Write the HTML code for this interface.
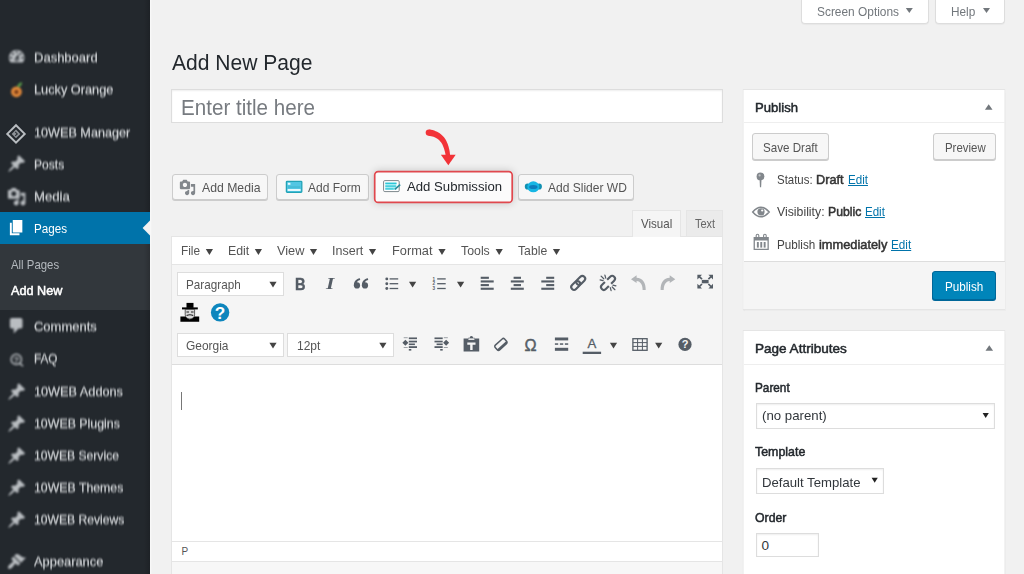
<!DOCTYPE html>
<html lang="en"><head><meta charset="utf-8"><title>Add New Page</title><style>
html,body{margin:0;padding:0;background:#f1f1f1}
body{width:1024px;height:574px;overflow:hidden;background:#f1f1f1;position:relative;font-family:"Liberation Sans",sans-serif;}
.t{position:absolute;white-space:nowrap;display:block;transform-origin:0 0}
.b{position:absolute;box-sizing:border-box;display:block}
.blur{filter:blur(0.8px);-webkit-text-stroke:0.3px currentColor}
.blur2{filter:blur(0.55px)}
svg{overflow:visible}
</style></head><body>
<div class="b" style="left:0px;top:0px;width:150px;height:574px;background:#23282d"></div>
<div class="b" style="left:0px;top:212px;width:150px;height:32px;background:#0073aa"></div>
<div class="b" style="left:0px;top:244px;width:150px;height:66px;background:#32373c"></div>
<svg class="b" style="left:0px;top:0px;" width="1024" height="574" viewBox="0 0 1024 574"><polygon points="150.5,220 150.5,236 142.6,228" fill="#f1f1f1"/></svg>
<div class="b" style="left:150px;top:0px;width:2px;height:574px;background:linear-gradient(to right,rgba(255,255,255,.7),rgba(255,255,255,0));"></div>
<div class="b" style="left:144px;top:0px;width:6px;height:212px;background:linear-gradient(to right,rgba(0,0,0,0),rgba(0,0,0,.16));"></div>
<div class="b" style="left:144px;top:244px;width:6px;height:330px;background:linear-gradient(to right,rgba(0,0,0,0),rgba(0,0,0,.16));"></div>
<span class="t blur" style="left:33.60px;top:51px;font-size:13.4px;line-height:13.4px;color:#cdd0d3;transform:scaleX(0.9716);">Dashboard</span>
<span class="t blur" style="left:33.60px;top:83px;font-size:13.4px;line-height:13.4px;color:#cdd0d3;transform:scaleX(0.9519);">Lucky Orange</span>
<span class="t blur" style="left:33.60px;top:126px;font-size:13.4px;line-height:13.4px;color:#cdd0d3;transform:scaleX(0.9437);">10WEB Manager</span>
<span class="t blur" style="left:33.60px;top:158px;font-size:13.4px;line-height:13.4px;color:#cdd0d3;transform:scaleX(0.9015);">Posts</span>
<span class="t blur" style="left:33.60px;top:190px;font-size:13.4px;line-height:13.4px;color:#cdd0d3;transform:scaleX(0.9832);">Media</span>
<span class="t" style="left:33.90px;top:222px;font-size:13.6px;line-height:13.6px;color:#fff;transform:scaleX(0.8585);">Pages</span>
<span class="t" style="left:10.90px;top:259px;font-size:12.6px;line-height:12.6px;color:#b4b9be;transform:scaleX(0.9035);">All Pages</span>
<span class="t" style="left:10.90px;top:285px;font-size:12.6px;line-height:12.6px;color:#fff;-webkit-text-stroke:0.5px currentColor;transform:scaleX(1.0048);">Add New</span>
<span class="t blur" style="left:33.60px;top:320px;font-size:13.4px;line-height:13.4px;color:#cdd0d3;transform:scaleX(0.9693);">Comments</span>
<span class="t blur" style="left:33.60px;top:352px;font-size:13.4px;line-height:13.4px;color:#cdd0d3;transform:scaleX(0.8769);">FAQ</span>
<span class="t blur" style="left:33.60px;top:385px;font-size:13.4px;line-height:13.4px;color:#cdd0d3;transform:scaleX(0.9482);">10WEB Addons</span>
<span class="t blur" style="left:33.60px;top:417px;font-size:13.4px;line-height:13.4px;color:#cdd0d3;transform:scaleX(0.9227);">10WEB Plugins</span>
<span class="t blur" style="left:33.60px;top:449px;font-size:13.4px;line-height:13.4px;color:#cdd0d3;transform:scaleX(0.9059);">10WEB Service</span>
<span class="t blur" style="left:33.60px;top:481px;font-size:13.4px;line-height:13.4px;color:#cdd0d3;transform:scaleX(0.9186);">10WEB Themes</span>
<span class="t blur" style="left:33.60px;top:513px;font-size:13.4px;line-height:13.4px;color:#cdd0d3;transform:scaleX(0.9058);">10WEB Reviews</span>
<span class="t blur" style="left:33.60px;top:555px;font-size:13.4px;line-height:13.4px;color:#cdd0d3;transform:scaleX(0.9604);">Appearance</span>
<svg class="b blur" style="left:6.5px;top:47.3px;" width="19.4" height="19.4" viewBox="0 0 20 20"><path d="M3.76 16h12.48c1.1-1.37 1.76-3.11 1.76-5 0-4.42-3.58-8-8-8s-8 3.58-8 8c0 1.89.66 3.63 1.76 5zM10 4c.55 0 1 .45 1 1s-.45 1-1 1-1-.45-1-1 .45-1 1-1zM6 6c.55 0 1 .45 1 1s-.45 1-1 1-1-.45-1-1 .45-1 1-1zm8 0c.55 0 1 .45 1 1s-.45 1-1 1-1-.45-1-1 .45-1 1-1zm-5.37 5.55L12 7v6c0 1.1-.9 2-2 2s-2-.9-2-2c0-.57.24-1.08.63-1.45zM4 10c.55 0 1 .45 1 1s-.45 1-1 1-1-.45-1-1 .45-1 1-1zm12 0c.55 0 1 .45 1 1s-.45 1-1 1-1-.45-1-1 .45-1 1-1zm-5 3c0-.55-.45-1-1-1s-1 .45-1 1 .45 1 1 1 1-.45 1-1z" fill="#b9bdc1" fill-rule="evenodd"/></svg>
<svg class="b blur" style="left:0px;top:0px;" width="1024" height="574" viewBox="0 0 1024 574"><circle cx="16.4" cy="91.8" r="5.4" fill="#e58a3a"/><circle cx="16.4" cy="92" r="2.2" fill="#7a3d18"/><path d="M17,86.6 q1,-3.6 4.8,-4.6 q0.6,3.8 -3.2,5.2z" fill="#5a9c4a"/></svg>
<svg class="b blur2" style="left:0px;top:0px;" width="1024" height="574" viewBox="0 0 1024 574"><polygon points="16,125.2 24.7,133.900 16,142.6 7.3,133.900" fill="none" stroke="#b9bdc1" stroke-width="2"/><polygon points="16,129.6 20.3,133.900 16,138.2 11.7,133.900" fill="#8d9297"/><path d="M15.2,131.900 l2,2 l-2,2" stroke="#2b3035" stroke-width="1.2" fill="none"/></svg>
<svg class="b blur" style="left:6.5px;top:154.0px;" width="19.4" height="19.4" viewBox="0 0 20 20"><path d="M10.44 3.02l1.82-1.82 6.36 6.35-1.83 1.82c-1.05-.68-2.48-.57-3.41.36l-.75.75c-.92.93-1.04 2.35-.35 3.41l-1.83 1.82-2.41-2.41-2.8 2.79c-.42.42-3.38 2.71-3.8 2.29s1.86-3.39 2.28-3.81l2.79-2.79L4.1 9.36l1.83-1.82c1.05.69 2.48.57 3.4-.36l.75-.75c.93-.92 1.05-2.35.36-3.41z" fill="#b9bdc1" fill-rule="evenodd"/></svg>
<svg class="b blur" style="left:6.5px;top:186.5px;" width="19.4" height="19.4" viewBox="0 0 20 20"><path d="M13 11V4c0-.55-.45-1-1-1h-1.67L9 1H5L3.67 3H2c-.55 0-1 .45-1 1v7c0 .55.45 1 1 1h10c.55 0 1-.45 1-1zM7 4.5c1.38 0 2.5 1.12 2.5 2.5S8.38 9.5 7 9.5 4.5 8.38 4.5 7 5.62 4.5 7 4.5zM14 6h5v10.5c0 1.38-1.12 2.5-2.5 2.5S14 17.88 14 16.5s1.12-2.5 2.5-2.5c.17 0 .34.02.5.05V9h-3V6zm-4 8.050V13h2v3.500c0 1.380-1.120 2.500-2.500 2.500S7 17.880 7 16.500 8.120 14 9.500 14c.17 0 .34.020.5.050z" fill="#b9bdc1" fill-rule="evenodd"/></svg>
<svg class="b" style="left:6.6px;top:218.4px;" width="19.2" height="19.2" viewBox="0 0 20 20"><path d="M6 15V2h10v13H6zm-1 1h8v2H3V5h2v11z" fill="#fff" fill-rule="evenodd"/></svg>
<svg class="b blur" style="left:6.5px;top:316.3px;" width="19.4" height="19.4" viewBox="0 0 20 20"><path d="M5 2h9c1.1 0 2 .9 2 2v7c0 1.1-.9 2-2 2h-2l-5 5v-5H5c-1.1 0-2-.9-2-2V4c0-1.1.9-2 2-2z" fill="#b9bdc1" fill-rule="evenodd"/></svg>
<svg class="b blur" style="left:0px;top:0px;" width="1024" height="574" viewBox="0 0 1024 574"><g fill="none" stroke="#b9bdc1" stroke-width="1.5"><circle cx="16.3" cy="359.400" r="5.1"/><path d="M19.8,363.4 l3.2,2.800"/></g><text x="16.2" y="362.6" text-anchor="middle" font-size="9" font-weight="bold" fill="#b9bdc1" font-family="Liberation Sans,sans-serif">?</text></svg>
<svg class="b blur" style="left:6.5px;top:381.7px;" width="19.4" height="19.4" viewBox="0 0 20 20"><path d="M10.44 3.02l1.82-1.82 6.36 6.35-1.83 1.82c-1.05-.68-2.48-.57-3.41.36l-.75.75c-.92.93-1.04 2.35-.35 3.41l-1.83 1.82-2.41-2.41-2.8 2.79c-.42.42-3.38 2.71-3.8 2.29s1.86-3.39 2.28-3.81l2.79-2.79L4.1 9.36l1.83-1.82c1.05.69 2.48.57 3.4-.36l.75-.75c.93-.92 1.05-2.35.36-3.41z" fill="#b9bdc1" fill-rule="evenodd"/></svg>
<svg class="b blur" style="left:6.5px;top:413.7px;" width="19.4" height="19.4" viewBox="0 0 20 20"><path d="M10.44 3.02l1.82-1.82 6.36 6.35-1.83 1.82c-1.05-.68-2.48-.57-3.41.36l-.75.75c-.92.93-1.04 2.35-.35 3.41l-1.83 1.82-2.41-2.41-2.8 2.79c-.42.42-3.38 2.71-3.8 2.29s1.86-3.39 2.28-3.81l2.79-2.79L4.1 9.36l1.83-1.82c1.05.69 2.48.57 3.4-.36l.75-.75c.93-.92 1.05-2.35.36-3.41z" fill="#b9bdc1" fill-rule="evenodd"/></svg>
<svg class="b blur" style="left:6.5px;top:445.7px;" width="19.4" height="19.4" viewBox="0 0 20 20"><path d="M10.44 3.02l1.82-1.82 6.36 6.35-1.83 1.82c-1.05-.68-2.48-.57-3.41.36l-.75.75c-.92.93-1.04 2.35-.35 3.41l-1.83 1.82-2.41-2.41-2.8 2.79c-.42.42-3.38 2.71-3.8 2.29s1.86-3.39 2.28-3.81l2.79-2.79L4.1 9.36l1.83-1.82c1.05.69 2.48.57 3.4-.36l.75-.75c.93-.92 1.05-2.35.36-3.41z" fill="#b9bdc1" fill-rule="evenodd"/></svg>
<svg class="b blur" style="left:6.5px;top:477.7px;" width="19.4" height="19.4" viewBox="0 0 20 20"><path d="M10.44 3.02l1.82-1.82 6.36 6.35-1.83 1.82c-1.05-.68-2.48-.57-3.41.36l-.75.75c-.92.93-1.04 2.35-.35 3.41l-1.83 1.82-2.41-2.41-2.8 2.79c-.42.42-3.38 2.71-3.8 2.29s1.86-3.39 2.28-3.81l2.79-2.79L4.1 9.36l1.83-1.82c1.05.69 2.48.57 3.4-.36l.75-.75c.93-.92 1.05-2.35.36-3.41z" fill="#b9bdc1" fill-rule="evenodd"/></svg>
<svg class="b blur" style="left:6.5px;top:509.7px;" width="19.4" height="19.4" viewBox="0 0 20 20"><path d="M10.44 3.02l1.82-1.82 6.36 6.35-1.83 1.82c-1.05-.68-2.48-.57-3.41.36l-.75.75c-.92.93-1.04 2.35-.35 3.41l-1.83 1.82-2.41-2.41-2.8 2.79c-.42.42-3.38 2.71-3.8 2.29s1.86-3.39 2.28-3.81l2.79-2.79L4.1 9.36l1.83-1.82c1.05.69 2.48.57 3.4-.36l.75-.75c.93-.92 1.05-2.35.36-3.41z" fill="#b9bdc1" fill-rule="evenodd"/></svg>
<svg class="b blur" style="left:6.5px;top:551.6999999999999px;" width="19.4" height="19.4" viewBox="0 0 20 20"><path d="M14.48 11.06L7.41 3.99l1.5-1.5c.5-.56 2.3-.47 3.51.32 1.21.8 1.43 1.280 2.910 2.100 1.180.640 2.450 1.260 4.450.850zm-.71.710L6.700 4.700 4.930 6.470c-.39.390-.39 1.020 0 1.410l1.060 1.060c.390.390.390 1.030 0 1.420-.6.600-1.430 1.110-2.210 1.690-.35.260-.7.530-1.010.84C1.430 14.230.4 16.080 1.400 17.070c.990 1 2.840-.030 4.180-1.360.310-.310.580-.660.850-1.020.570-.780 1.080-1.610 1.690-2.210.390-.390 1.020-.390 1.410 0l1.060 1.060c.390.390 1.020.390 1.410 0z" fill="#b9bdc1" fill-rule="evenodd"/></svg>
<div class="b" style="left:801px;top:-1px;width:128px;height:25px;background:#fff;border:1px solid #ddd;border-top:none;border-radius:0 0 4px 4px;box-shadow:0 1px 1px rgba(0,0,0,.04);"></div>
<span class="t" style="left:816.50px;top:6px;font-size:12.6px;line-height:12.6px;color:#72777c;transform:scaleX(0.9454);">Screen Options</span>
<svg class="b" style="left:0;top:0" width="1024" height="574"><polygon points="905.8,7.9 912.8,7.9 909.3,13.1" fill="#72777c"/></svg>
<div class="b" style="left:935px;top:-1px;width:70px;height:25px;background:#fff;border:1px solid #ddd;border-top:none;border-radius:0 0 4px 4px;box-shadow:0 1px 1px rgba(0,0,0,.04);"></div>
<span class="t" style="left:951.40px;top:6px;font-size:12.6px;line-height:12.6px;color:#72777c;transform:scaleX(0.9373);">Help</span>
<svg class="b" style="left:0;top:0" width="1024" height="574"><polygon points="983.0,7.9 990.0,7.9 986.5,13.1" fill="#72777c"/></svg>
<span class="t" style="left:171.50px;top:52px;font-size:22.4px;line-height:22.4px;color:#23282d;transform:scaleX(0.9404);">Add New Page</span>
<div class="b" style="left:171px;top:89px;width:552px;height:34px;background:#fff;border:1px solid #ddd;box-shadow:inset 0 1px 2px rgba(0,0,0,.07);"></div>
<span class="t" style="left:181.00px;top:98px;font-size:21.4px;line-height:21.4px;color:#777b80;transform:scaleX(0.9630);">Enter title here</span>
<svg class="b" style="left:0px;top:0px;" width="1024" height="574" viewBox="0 0 1024 574"><polygon points="428.5,135.8 429.9,135.9 431.2,136.2 432.4,136.5 433.5,136.8 434.6,137.2 435.6,137.7 436.5,138.2 437.4,138.8 438.3,139.4 439.1,140.1 439.8,140.9 440.5,141.7 441.2,142.6 441.8,143.6 442.4,144.6 442.9,145.7 443.4,146.9 443.9,148.2 444.3,149.6 444.7,151.0 445.1,152.5 445.4,154.1 445.7,155.8 450.1,155.2 449.9,153.4 449.7,151.7 449.4,150.0 449.0,148.4 448.6,146.8 448.1,145.3 447.6,143.8 447.0,142.4 446.4,141.0 445.7,139.7 444.9,138.5 444.0,137.3 443.0,136.2 442.0,135.2 440.9,134.2 439.7,133.3 438.4,132.5 437.1,131.8 435.7,131.2 434.2,130.6 432.6,130.1 431.0,129.7 429.3,129.4" fill="#f23338"/><circle cx="428.9" cy="132.6" r="3.2" fill="#f23338"/><polygon points="440.9,154.8 455.7,154.8 448.3,165.3" fill="#f23338"/></svg>
<div class="b" style="left:172px;top:174px;width:96px;height:26px;background:#f7f7f7;border:1px solid #ccc;border-radius:3px;box-shadow:0 1px 0 #ccc;"></div>
<span class="t" style="left:201.50px;top:182px;font-size:12.6px;line-height:12.6px;color:#555;transform:scaleX(0.9708);">Add Media</span>
<div class="b" style="left:276px;top:174px;width:93px;height:26px;background:#f7f7f7;border:1px solid #ccc;border-radius:3px;box-shadow:0 1px 0 #ccc;"></div>
<span class="t" style="left:308.30px;top:182px;font-size:12.6px;line-height:12.6px;color:#555;transform:scaleX(0.9527);">Add Form</span>
<div class="b" style="left:374px;top:171px;width:139px;height:32px;background:#fbfbfb;border-radius:4px;box-shadow:0 0 9px rgba(0,0,0,.2);"></div>
<svg class="b" style="left:0px;top:0px;" width="1024" height="574" viewBox="0 0 1024 574"><rect x="374.7" y="171.6" width="137.5" height="30.7" rx="3.4" fill="none" stroke="#e0484e" stroke-width="1.7"/></svg>
<span class="t" style="left:406.60px;top:180px;font-size:13.4px;line-height:13.4px;color:#23282d;transform:scaleX(0.9819);">Add Submission</span>
<div class="b" style="left:518px;top:174px;width:116px;height:26px;background:#f7f7f7;border:1px solid #ccc;border-radius:3px;box-shadow:0 1px 0 #ccc;"></div>
<span class="t" style="left:547.50px;top:182px;font-size:12.6px;line-height:12.6px;color:#555;transform:scaleX(0.9549);">Add Slider WD</span>
<div class="b" style="left:632px;top:210px;width:49px;height:27px;background:#f5f5f5;border:1px solid #e5e5e5;border-bottom:none;"></div>
<span class="t" style="left:640.70px;top:218px;font-size:12.6px;line-height:12.6px;color:#555;transform:scaleX(0.9183);">Visual</span>
<div class="b" style="left:686px;top:210px;width:37px;height:26px;background:#ebebeb;border:1px solid #e5e5e5;border-bottom:none;"></div>
<span class="t" style="left:694.60px;top:218px;font-size:12.6px;line-height:12.6px;color:#666;transform:scaleX(0.8737);">Text</span>
<div class="b" style="left:171px;top:236px;width:552px;height:326px;background:#fff;border:1px solid #e5e5e5;"></div>
<div class="b" style="left:172px;top:264px;width:550px;height:101px;background:#f5f5f5;border-top:1px solid #e5e5e5;border-bottom:1px solid #ddd;"></div>
<div class="b" style="left:632px;top:236px;width:49px;height:1px;background:#f5f5f5;border-left:1px solid #e5e5e5;border-right:1px solid #e5e5e5;"></div>
<div class="b" style="left:172px;top:541px;width:550px;height:1px;background:#e5e5e5"></div>
<div class="b" style="left:171px;top:561px;width:552px;height:19px;background:#f7f7f7;border:1px solid #e5e5e5;"></div>
<span class="t" style="left:181.60px;top:547px;font-size:10px;line-height:10px;color:#555;">P</span>
<div class="b" style="left:181px;top:392px;width:1px;height:18px;background:#777"></div>
<span class="t" style="left:180.90px;top:244px;font-size:13.6px;line-height:13.6px;color:#555;transform:scaleX(0.8710);">File</span>
<svg class="b" style="left:0;top:0" width="1024" height="574"><polygon points="205.8,248.9 213.0,248.9 209.4,254.9" fill="#444"/></svg>
<span class="t" style="left:227.70px;top:244px;font-size:13.6px;line-height:13.6px;color:#555;transform:scaleX(0.9092);">Edit</span>
<svg class="b" style="left:0;top:0" width="1024" height="574"><polygon points="254.79999999999998,248.9 262.0,248.9 258.4,254.9" fill="#444"/></svg>
<span class="t" style="left:277.00px;top:244px;font-size:13.6px;line-height:13.6px;color:#555;transform:scaleX(0.9394);">View</span>
<svg class="b" style="left:0;top:0" width="1024" height="574"><polygon points="309.9,248.9 317.1,248.9 313.5,254.9" fill="#444"/></svg>
<span class="t" style="left:332.30px;top:244px;font-size:13.6px;line-height:13.6px;color:#555;transform:scaleX(0.9206);">Insert</span>
<svg class="b" style="left:0;top:0" width="1024" height="574"><polygon points="368.9,248.9 376.1,248.9 372.5,254.9" fill="#444"/></svg>
<span class="t" style="left:392.00px;top:244px;font-size:13.6px;line-height:13.6px;color:#555;transform:scaleX(0.9402);">Format</span>
<svg class="b" style="left:0;top:0" width="1024" height="574"><polygon points="438.4,248.9 445.6,248.9 442,254.9" fill="#444"/></svg>
<span class="t" style="left:461.00px;top:244px;font-size:13.6px;line-height:13.6px;color:#555;transform:scaleX(0.9069);">Tools</span>
<svg class="b" style="left:0;top:0" width="1024" height="574"><polygon points="495.59999999999997,248.9 502.8,248.9 499.2,254.9" fill="#444"/></svg>
<span class="t" style="left:517.80px;top:244px;font-size:13.6px;line-height:13.6px;color:#555;transform:scaleX(0.8984);">Table</span>
<svg class="b" style="left:0;top:0" width="1024" height="574"><polygon points="552.9,248.9 560.1,248.9 556.5,254.9" fill="#444"/></svg>
<div class="b" style="left:177px;top:272px;width:107px;height:24px;background:#fff;border:1px solid #ddd;"></div>
<span class="t" style="left:186.20px;top:279px;font-size:12.6px;line-height:12.6px;color:#555;transform:scaleX(0.9296);">Paragraph</span>
<svg class="b" style="left:0;top:0" width="1024" height="574"><polygon points="269.4,281.65000000000003 276.6,281.65000000000003 273,287.55" fill="#444"/></svg>
<div class="b" style="left:177px;top:333px;width:107px;height:24px;background:#fff;border:1px solid #ddd;"></div>
<span class="t" style="left:186.20px;top:340px;font-size:12.6px;line-height:12.6px;color:#555;transform:scaleX(0.9475);">Georgia</span>
<svg class="b" style="left:0;top:0" width="1024" height="574"><polygon points="269.4,342.65000000000003 276.6,342.65000000000003 273,348.55" fill="#444"/></svg>
<div class="b" style="left:287px;top:333px;width:107px;height:24px;background:#fff;border:1px solid #ddd;"></div>
<span class="t" style="left:297.40px;top:340px;font-size:12.6px;line-height:12.6px;color:#555;transform:scaleX(0.9536);">12pt</span>
<svg class="b" style="left:0;top:0" width="1024" height="574"><polygon points="379.29999999999995,342.65000000000003 386.5,342.65000000000003 382.9,348.55" fill="#444"/></svg>
<div class="b" style="left:743px;top:89px;width:263px;height:221px;background:#fff;border:1px solid #e5e5e5;box-shadow:0 1px 1px rgba(0,0,0,.04);transform:translateX(-0.5px);"></div>
<div class="b" style="left:744px;top:122px;width:261px;height:1px;background:#eee"></div>
<span class="t" style="left:755.00px;top:101px;font-size:13.6px;line-height:13.6px;color:#23282d;-webkit-text-stroke:0.5px currentColor;transform:scaleX(0.9640);">Publish</span>
<svg class="b" style="left:0;top:0" width="1024" height="574"><polygon points="984.9000000000001,109.7 992.5,109.7 988.7,104.3" fill="#72777c"/></svg>
<div class="b" style="left:752px;top:133px;width:77px;height:27px;background:#f7f7f7;border:1px solid #ccc;border-radius:3px;box-shadow:0 1px 0 #ccc;"></div>
<span class="t" style="left:763.20px;top:142px;font-size:12.6px;line-height:12.6px;color:#555;transform:scaleX(0.9205);">Save Draft</span>
<div class="b" style="left:933px;top:133px;width:63px;height:27px;background:#f7f7f7;border:1px solid #ccc;border-radius:3px;box-shadow:0 1px 0 #ccc;"></div>
<span class="t" style="left:944.50px;top:142px;font-size:12.6px;line-height:12.6px;color:#555;transform:scaleX(0.9073);">Preview</span>
<span class="t" style="left:776.80px;top:174px;font-size:12.6px;line-height:12.6px;color:#444;transform:scaleX(0.9078);">Status:</span>
<span class="t" style="left:816.20px;top:174px;font-size:12.6px;line-height:12.6px;color:#333;-webkit-text-stroke:0.5px currentColor;transform:scaleX(1.0106);">Draft</span>
<span class="t" style="left:847.90px;top:174px;font-size:12.6px;line-height:12.6px;color:#0073aa;transform:scaleX(0.9215);text-decoration:underline;">Edit</span>
<span class="t" style="left:776.80px;top:206px;font-size:12.6px;line-height:12.6px;color:#444;transform:scaleX(0.9755);">Visibility:</span>
<span class="t" style="left:828.00px;top:206px;font-size:12.6px;line-height:12.6px;color:#333;-webkit-text-stroke:0.5px currentColor;transform:scaleX(0.9707);">Public</span>
<span class="t" style="left:865.20px;top:206px;font-size:12.6px;line-height:12.6px;color:#0073aa;transform:scaleX(0.9169);text-decoration:underline;">Edit</span>
<span class="t" style="left:776.80px;top:239px;font-size:12.6px;line-height:12.6px;color:#444;transform:scaleX(0.9267);">Publish</span>
<span class="t" style="left:819.20px;top:239px;font-size:12.6px;line-height:12.6px;color:#333;-webkit-text-stroke:0.5px currentColor;transform:scaleX(1.0175);">immediately</span>
<span class="t" style="left:891.40px;top:239px;font-size:12.6px;line-height:12.6px;color:#0073aa;transform:scaleX(0.9307);text-decoration:underline;">Edit</span>
<div class="b" style="left:744px;top:261px;width:261px;height:48px;background:#f5f5f5;border-top:1px solid #ddd;"></div>
<div class="b" style="left:932px;top:271px;width:64px;height:29px;background:#0085ba;border:1px solid #006799;border-radius:3px;box-shadow:0 1px 0 #006799;"></div>
<span class="t" style="left:945.00px;top:281px;font-size:12.6px;line-height:12.6px;color:#fff;transform:scaleX(0.9267);">Publish</span>
<div class="b" style="left:743px;top:330px;width:263px;height:260px;background:#fff;border:1px solid #e5e5e5;box-shadow:0 1px 1px rgba(0,0,0,.04);transform:translateX(-0.5px);"></div>
<div class="b" style="left:744px;top:364px;width:261px;height:1px;background:#eee"></div>
<span class="t" style="left:755.00px;top:342px;font-size:13.6px;line-height:13.6px;color:#23282d;-webkit-text-stroke:0.5px currentColor;transform:scaleX(0.9952);">Page Attributes</span>
<svg class="b" style="left:0;top:0" width="1024" height="574"><polygon points="985.5,350.7 993.0999999999999,350.7 989.3,345.3" fill="#72777c"/></svg>
<span class="t" style="left:755.00px;top:382px;font-size:12.6px;line-height:12.6px;color:#23282d;-webkit-text-stroke:0.5px currentColor;transform:scaleX(0.9343);">Parent</span>
<div class="b" style="left:756px;top:403px;width:239px;height:26px;background:#fff;border:1px solid #ddd;box-shadow:inset 0 1px 2px rgba(0,0,0,.07);"></div>
<span class="t" style="left:761.80px;top:409px;font-size:13.6px;line-height:13.6px;color:#32373c;transform:scaleX(0.9739);">(no parent)</span>
<svg class="b" style="left:0;top:0" width="1024" height="574"><polygon points="982.6,413.0 988.8000000000001,413.0 985.7,418.0" fill="#222"/></svg>
<span class="t" style="left:755.00px;top:446px;font-size:12.6px;line-height:12.6px;color:#23282d;-webkit-text-stroke:0.5px currentColor;transform:scaleX(0.9839);">Template</span>
<div class="b" style="left:756px;top:468px;width:128px;height:26px;background:#fff;border:1px solid #ddd;box-shadow:inset 0 1px 2px rgba(0,0,0,.07);"></div>
<span class="t" style="left:762.30px;top:476px;font-size:13.6px;line-height:13.6px;color:#32373c;transform:scaleX(0.9676);">Default Template</span>
<svg class="b" style="left:0;top:0" width="1024" height="574"><polygon points="871.6,477.8 877.8000000000001,477.8 874.7,482.8" fill="#222"/></svg>
<span class="t" style="left:755.00px;top:512px;font-size:12.6px;line-height:12.6px;color:#23282d;-webkit-text-stroke:0.5px currentColor;transform:scaleX(0.9754);">Order</span>
<div class="b" style="left:756px;top:533px;width:63px;height:24px;background:#fff;border:1px solid #ddd;box-shadow:inset 0 1px 2px rgba(0,0,0,.07);"></div>
<span class="t" style="left:761.50px;top:539px;font-size:13.6px;line-height:13.6px;color:#32373c;">0</span>
<span class="t" style="left:294.90px;top:276px;font-size:16.2px;line-height:16.2px;color:#555d66;font-weight:bold;transform:scaleX(.9);transform-origin:0 0;-webkit-text-stroke:0.4px currentColor;">B</span>
<span class="t" style="left:325.6px;top:275.4px;font-size:17.6px;line-height:17.6px;color:#555d66;font-family:'Liberation Serif',serif;font-style:italic;font-weight:bold;transform:scaleX(1.22);transform-origin:0 0">I</span>
<svg class="b" style="left:0px;top:0px;" width="1024" height="574" viewBox="0 0 1024 574"><circle cx="357.0" cy="285.40000000000003" r="3.1" fill="#555d66"/><path d="M353.9,285.8 C353.7,281.40000000000003 356.4,278.8 359.9,278.3 L360.2,280.00000000000006 C357.8,280.6 356.8,281.8 356.8,283.40000000000003z" fill="#555d66"/><circle cx="365.0" cy="285.40000000000003" r="3.1" fill="#555d66"/><path d="M361.9,285.8 C361.7,281.40000000000003 364.4,278.8 367.9,278.3 L368.2,280.00000000000006 C365.8,280.6 364.8,281.8 364.8,283.40000000000003z" fill="#555d66"/></svg>
<svg class="b" style="left:0px;top:0px;" width="1024" height="574" viewBox="0 0 1024 574"><circle cx="386.8" cy="278.9" r="1.45" fill="#555d66"/><rect x="389.6" y="278.25" width="8.6" height="1.3" fill="#555d66"/><circle cx="386.8" cy="283.7" r="1.45" fill="#555d66"/><rect x="389.6" y="283.05" width="8.6" height="1.3" fill="#555d66"/><circle cx="386.8" cy="288.5" r="1.45" fill="#555d66"/><rect x="389.6" y="287.85" width="8.6" height="1.3" fill="#555d66"/></svg>
<svg class="b" style="left:0;top:0" width="1024" height="574"><polygon points="409.0,281.65000000000003 416.20000000000005,281.65000000000003 412.6,287.55" fill="#444"/></svg>
<svg class="b" style="left:0px;top:0px;" width="1024" height="574" viewBox="0 0 1024 574"><rect x="437.2" y="278.25" width="8.5" height="1.3" fill="#555d66"/><text x="432.4" y="280.5" font-size="4.6" font-weight="bold" fill="#555d66" font-family="Liberation Sans,sans-serif">1</text><rect x="437.2" y="283.05" width="8.5" height="1.3" fill="#555d66"/><text x="432.4" y="285.3" font-size="4.6" font-weight="bold" fill="#555d66" font-family="Liberation Sans,sans-serif">2</text><rect x="437.2" y="287.85" width="8.5" height="1.3" fill="#555d66"/><text x="432.4" y="290.1" font-size="4.6" font-weight="bold" fill="#555d66" font-family="Liberation Sans,sans-serif">3</text></svg>
<svg class="b" style="left:0;top:0" width="1024" height="574"><polygon points="457.0,281.65000000000003 464.20000000000005,281.65000000000003 460.6,287.55" fill="#444"/></svg>
<svg class="b" style="left:0px;top:0px;" width="1024" height="574" viewBox="0 0 1024 574"><rect x="480.7" y="276.75" width="8.199999999999989" height="2.1" fill="#555d66"/><rect x="480.7" y="280.4" width="13.0" height="2.1" fill="#555d66"/><rect x="480.7" y="284.05" width="8.199999999999989" height="2.1" fill="#555d66"/><rect x="480.7" y="287.7" width="13.0" height="2.1" fill="#555d66"/></svg>
<svg class="b" style="left:0px;top:0px;" width="1024" height="574" viewBox="0 0 1024 574"><rect x="513.6" y="276.75" width="7.399999999999977" height="2.1" fill="#555d66"/><rect x="510.8" y="280.4" width="12.999999999999943" height="2.1" fill="#555d66"/><rect x="513.6" y="284.05" width="7.399999999999977" height="2.1" fill="#555d66"/><rect x="510.8" y="287.7" width="12.999999999999943" height="2.1" fill="#555d66"/></svg>
<svg class="b" style="left:0px;top:0px;" width="1024" height="574" viewBox="0 0 1024 574"><rect x="546.2" y="276.75" width="8.0" height="2.1" fill="#555d66"/><rect x="541.3" y="280.4" width="12.900000000000091" height="2.1" fill="#555d66"/><rect x="546.2" y="284.05" width="8.0" height="2.1" fill="#555d66"/><rect x="541.3" y="287.7" width="12.900000000000091" height="2.1" fill="#555d66"/></svg>
<svg class="b" style="left:0px;top:0px;" width="1024" height="574" viewBox="0 0 1024 574"><g transform="translate(578.2,282.9) rotate(-45)" fill="none" stroke="#555d66" stroke-width="2.1"><rect x="-8.65" y="-2.8" width="10.2" height="5.6" rx="2.8"/><rect x="-1.55" y="-2.8" width="10.2" height="5.6" rx="2.8"/></g></svg>
<svg class="b" style="left:0px;top:0px;" width="1024" height="574" viewBox="0 0 1024 574"><g transform="translate(608,282.9) rotate(-45)" fill="none" stroke="#555d66" stroke-width="2.1"><path d="M-1.6,-2.8 h-4.3 a2.8,2.8 0 0 0 0,5.6 h4.3"/><path d="M1.6,-2.8 h4.3 a2.8,2.8 0 0 1 0,5.6 h-4.3"/></g><g stroke="#555d66" stroke-width="1.25" stroke-linecap="round"><path d="M601.1,276.1 l2.7,2.7 M600.1,279.9 l3,0.8 M604.9,275.1 l0.8,3 M614.9,289.7 l-2.7,-2.7 M615.9,285.9 l-3,-0.8 M611.1,290.7 l-0.8,-3"/></g></svg>
<svg class="b" style="left:0px;top:0px;" width="1024" height="574" viewBox="0 0 1024 574"><path d="M631,279.2 L636.6,275.3 L636.6,277.7 C642.6,278 645.9,282.5 645.7,290 L642.6,290 C642.6,284.6 640.6,281.3 636.6,280.9 L636.6,283.1z" fill="#b2b5b8"/></svg>
<svg class="b" style="left:0px;top:0px;" width="1024" height="574" viewBox="0 0 1024 574"><path d="M675.3,279.2 L669.6999999999999,275.3 L669.6999999999999,277.7 C663.6999999999999,278 660.4,282.5 660.5999999999999,290 L663.6999999999999,290 C663.6999999999999,284.6 665.6999999999999,281.3 669.6999999999999,280.9 L669.6999999999999,283.1z" fill="#b2b5b8"/></svg>
<svg class="b" style="left:0px;top:0px;" width="1024" height="574" viewBox="0 0 1024 574"><rect x="701.8000000000001" y="279.90000000000003" width="6.8" height="3.4" fill="#555d66"/><polygon points="697.4000000000001,274.8 702.0000000000001,274.8 697.4000000000001,279.40000000000003" fill="#555d66"/><path d="M699.0000000000001,276.40000000000003 L702.0,279.20000000000005" stroke="#555d66" stroke-width="1.7"/><polygon points="697.4000000000001,288.40000000000003 702.0000000000001,288.40000000000003 697.4000000000001,283.8" fill="#555d66"/><path d="M699.0000000000001,286.8 L702.0,284.0" stroke="#555d66" stroke-width="1.7"/><polygon points="713.0,274.8 708.4,274.8 713.0,279.40000000000003" fill="#555d66"/><path d="M711.4,276.40000000000003 L708.4000000000001,279.20000000000005" stroke="#555d66" stroke-width="1.7"/><polygon points="713.0,288.40000000000003 708.4,288.40000000000003 713.0,283.8" fill="#555d66"/><path d="M711.4,286.8 L708.4000000000001,284.0" stroke="#555d66" stroke-width="1.7"/></svg>
<svg class="b" style="left:0px;top:0px;" width="1024" height="574" viewBox="0 0 1024 574"><g fill="#000"><rect x="186.5" y="302.9" width="7" height="5"/><rect x="182" y="307.4" width="15.8" height="2"/><path d="M180.4,316.6 h6 l3.4,3 l3.4,-3 h6 v5.2 h-18.8z"/></g><path d="M185.2,309.4 h9.4 v5.4 c0,2.4 -2,4.2 -4.7,4.2 s-4.7,-1.8 -4.7,-4.2z" fill="#d9d9d9" stroke="#222" stroke-width="0.7"/><path d="M186.4,312 h2.6 M191,312 h2.6" stroke="#222" stroke-width="1"/><path d="M186.6,315.6 q3.3,-1.8 6.6,0" stroke="#222" stroke-width="1.1" fill="none"/></svg>
<svg class="b" style="left:0px;top:0px;" width="1024" height="574" viewBox="0 0 1024 574"><circle cx="220.1" cy="312.4" r="9.2" fill="#0e86bd"/><text x="220.1" y="318.9" text-anchor="middle" font-size="17.2" font-weight="bold" fill="#fff" font-family="Liberation Sans,sans-serif">?</text></svg>
<svg class="b" style="left:0px;top:0px;" width="1024" height="574" viewBox="0 0 1024 574"><rect x="408.80" y="337.45" width="8.20" height="1.7" fill="#555d66"/><rect x="408.80" y="340.70" width="8.20" height="1.7" fill="#555d66"/><rect x="408.80" y="343.50" width="6.10" height="1.6" fill="#555d66"/><rect x="408.80" y="346.20" width="8.20" height="1.8" fill="#555d66"/><rect x="408.80" y="349.00" width="2.50" height="1.6" fill="#555d66"/><polygon points="402.4,342.7 405.4,339.7 408.4,342.7 405.4,345.7" fill="#555d66"/><rect x="403.70" y="337.2" width="4.00" height="1" fill="#555d66" opacity=".55"/><rect x="403.70" y="347.0" width="4.00" height="1" fill="#555d66" opacity=".55"/></svg>
<svg class="b" style="left:0px;top:0px;" width="1024" height="574" viewBox="0 0 1024 574"><rect x="434.50" y="337.45" width="8.20" height="1.7" fill="#555d66"/><rect x="434.50" y="340.70" width="8.20" height="1.7" fill="#555d66"/><rect x="436.60" y="343.50" width="6.10" height="1.6" fill="#555d66"/><rect x="434.50" y="346.20" width="8.20" height="1.8" fill="#555d66"/><rect x="440.20" y="349.00" width="2.50" height="1.6" fill="#555d66"/><polygon points="443.1000000000001,342.7 446.1000000000001,339.7 449.1000000000001,342.7 446.1000000000001,345.7" fill="#555d66"/><rect x="443.80" y="337.2" width="4.00" height="1" fill="#555d66" opacity=".55"/><rect x="443.80" y="347.0" width="4.00" height="1" fill="#555d66" opacity=".55"/></svg>
<svg class="b" style="left:0px;top:0px;" width="1024" height="574" viewBox="0 0 1024 574"><path d="M463.6,338.6 h4.6 v-0.8 h1.5 a1.7,1.7 0 0 1 3.4,0 h1.5 v0.8 h4.6 v13 h-15.6z" fill="#555d66"/><rect x="468.4" y="338.4" width="6" height="1.5" fill="#f5f5f5"/><path d="M467.3,342.4 h8.2 v2.3 h-2.9 v5.2 h-2.4 v-5.2 h-2.9z" fill="#f5f5f5"/></svg>
<svg class="b" style="left:0px;top:0px;" width="1024" height="574" viewBox="0 0 1024 574"><g transform="translate(500.9,344.4) rotate(-42)"><rect x="-6.3" y="-3.2" width="12.6" height="6.4" rx="1.7" fill="none" stroke="#555d66" stroke-width="1.5"/><path d="M-6.3,1.2 h12.6 v0.5 a1.5,1.5 0 0 1 -1.5,1.5 h-9.6 a1.5,1.5 0 0 1 -1.5,-1.5z" fill="#555d66"/></g></svg>
<span class="t" style="left:524.40px;top:337px;font-size:16.2px;line-height:16.2px;color:#555d66;-webkit-text-stroke:0.45px currentColor;">Ω</span>
<svg class="b" style="left:0px;top:0px;" width="1024" height="574" viewBox="0 0 1024 574"><rect x="554.9" y="337.5" width="13.3" height="2.9" fill="#555d66"/><rect x="554.9" y="347.8" width="13.3" height="3" fill="#555d66"/><rect x="554.9" y="343.3" width="3.3" height="1.5" fill="#555d66"/><rect x="559.9" y="343.3" width="3.3" height="1.5" fill="#555d66"/><rect x="564.9" y="343.3" width="3.3" height="1.5" fill="#555d66"/></svg>
<span class="t" style="left:587.40px;top:337px;font-size:13.2px;line-height:13.2px;color:#555d66;-webkit-text-stroke:0.3px currentColor;">A</span>
<svg class="b" style="left:0px;top:0px;" width="1024" height="574" viewBox="0 0 1024 574"><rect x="582.7" y="351.7" width="18.4" height="2.3" fill="#555d66"/></svg>
<svg class="b" style="left:0;top:0" width="1024" height="574"><polygon points="609.9,342.65000000000003 617.1,342.65000000000003 613.5,348.55" fill="#444"/></svg>
<svg class="b" style="left:0px;top:0px;" width="1024" height="574" viewBox="0 0 1024 574"><rect x="632.9" y="338.7" width="14.2" height="11.6" fill="none" stroke="#555d66" stroke-width="1.3"/><rect x="637.1" y="338.7" width="1" height="11.6" fill="#555d66"/><rect x="641.9" y="338.7" width="1" height="11.6" fill="#555d66"/><rect x="632.9" y="342.1" width="14.2" height="1" fill="#555d66"/><rect x="632.9" y="345.9" width="14.2" height="1" fill="#555d66"/></svg>
<svg class="b" style="left:0;top:0" width="1024" height="574"><polygon points="655.1,342.65000000000003 662.3000000000001,342.65000000000003 658.7,348.55" fill="#444"/></svg>
<svg class="b" style="left:0px;top:0px;" width="1024" height="574" viewBox="0 0 1024 574"><circle cx="685" cy="344.4" r="6.6" fill="#555d66"/><text x="685" y="348.4" text-anchor="middle" font-size="11" font-weight="bold" fill="#f5f5f5" font-family="Liberation Sans,sans-serif">?</text></svg>
<svg class="b" style="left:178.85px;top:178.95px;" width="17" height="17" viewBox="0 0 20 20"><path d="M13 11V4c0-.55-.45-1-1-1h-1.67L9 1H5L3.67 3H2c-.55 0-1 .45-1 1v7c0 .55.45 1 1 1h10c.55 0 1-.45 1-1zM7 4.5c1.38 0 2.5 1.12 2.5 2.5S8.38 9.5 7 9.5 4.5 8.38 4.5 7 5.62 4.5 7 4.5zM14 6h5v10.5c0 1.38-1.12 2.5-2.5 2.5S14 17.88 14 16.5s1.12-2.5 2.5-2.5c.17 0 .34.02.5.05V9h-3V6zm-4 8.050V13h2v3.500c0 1.380-1.120 2.500-2.500 2.500S7 17.880 7 16.500 8.120 14 9.500 14c.17 0 .34.020.5.050z" fill="#82878c" fill-rule="evenodd"/></svg>
<svg class="b" style="left:0px;top:0px;" width="1024" height="574" viewBox="0 0 1024 574"><rect x="286.4" y="181.3" width="15.4" height="11" rx="0.8" fill="#52c6e3" stroke="#21a3b6" stroke-width="1.3"/><rect x="287.8" y="182.8" width="2.6" height="2" fill="#e8fbff"/><rect x="288" y="186.6" width="12.2" height="0.9" fill="#2fa9bf" opacity="0.7"/><rect x="287.6" y="189" width="13" height="2" fill="#e4f8fd"/></svg>
<svg class="b" style="left:0px;top:0px;" width="1024" height="574" viewBox="0 0 1024 574"><rect x="383.6" y="180.6" width="15.6" height="11" rx="1.2" fill="#fff" stroke="#7c878c" stroke-width="1"/><rect x="385.3" y="182.3" width="11.2" height="7.6" fill="#a5ecf3"/><path d="M385.3,183.3 h11.2 M385.3,186.100 h10.6 M385.3,188.9 h8.4" stroke="#2ec6d6" stroke-width="1.3"/><path d="M400.2,184.6 l-5.4,4.800" stroke="#2a8e9c" stroke-width="1.6"/></svg>
<svg class="b" style="left:0px;top:0px;" width="1024" height="574" viewBox="0 0 1024 574"><ellipse cx="527.5" cy="186.500" rx="2.7" ry="3.1" fill="#1090b2"/><ellipse cx="539.2" cy="186.500" rx="2.7" ry="3.1" fill="#1090b2"/><ellipse cx="533.3" cy="186.8" rx="6" ry="5.5" fill="#16b6e4"/><ellipse cx="533.3" cy="187" rx="4.2" ry="2" fill="#0b6fb2" opacity=".8"/></svg>
<svg class="b" style="left:0px;top:0px;" width="1024" height="574" viewBox="0 0 1024 574"><circle cx="760.5" cy="176.4" r="3.9" fill="#82878c"/><circle cx="759.6" cy="175.4" r="1.1" fill="#fff" opacity=".5"/><path d="M759.6,179.6 h1.9 l-0.35,7.6 h-1.2z" fill="#82878c"/></svg>
<svg class="b" style="left:0px;top:0px;" width="1024" height="574" viewBox="0 0 1024 574"><path d="M752.7,212 q8.2,-9.6 16.5,0 q-8.3,9.6 -16.5,0z" fill="none" stroke="#82878c" stroke-width="1.5"/><circle cx="761" cy="211.8" r="3.6" fill="#82878c"/><circle cx="762.2" cy="210.5" r="1.1" fill="#fff"/></svg>
<svg class="b" style="left:0px;top:0px;" width="1024" height="574" viewBox="0 0 1024 574"><path d="M753.6,237 h15.2 v13 h-15.2z M754.9,240.6 v8.1 h12.6 v-8.1z" fill="#82878c" fill-rule="evenodd"/><rect x="756.9" y="242" width="1.9" height="5.6" fill="#82878c"/><rect x="760.3" y="242" width="1.9" height="5.6" fill="#82878c"/><rect x="763.7" y="242" width="1.9" height="5.6" fill="#82878c"/><path d="M756.2,238 v-2.4 a1.3,1.3 0 0 1 2.6,0 v2.4 M763.6,238 v-2.4 a1.3,1.3 0 0 1 2.6,0 v2.4" fill="none" stroke="#82878c" stroke-width="1.1"/></svg>
</body></html>
